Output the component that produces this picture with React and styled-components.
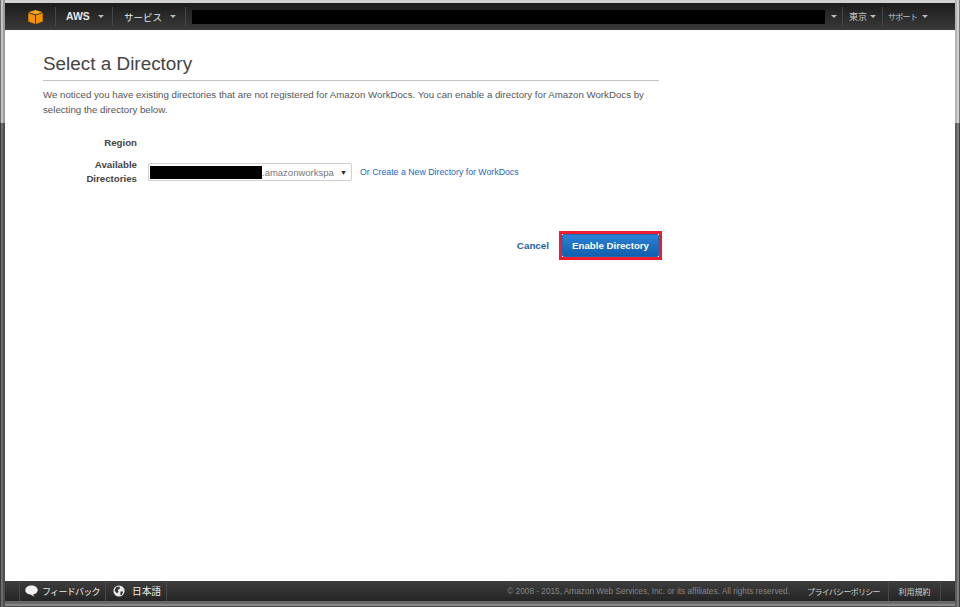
import React from "react";
import styled, { createGlobalStyle } from "styled-components";

const Global = createGlobalStyle`
  html, body { margin: 0; padding: 0; background: #fff; }
  body { font-family: "Liberation Sans", "Noto Sans CJK JP", sans-serif; }
  * { box-sizing: border-box; }
`;

const Frame = styled.div`
  width: 960px;
  height: 607px;
  overflow: hidden;
  display: grid;
  grid-template-rows: 27px 1fr 20px;
  padding: 3px 5px 6px 5px;
  background:
    linear-gradient(to right, #6e6e6e 0, #6e6e6e 1px, #c4c4c4 1px, #c4c4c4 3px, #9a9a9a 3px, #9a9a9a 5px, transparent 5px, transparent 955px, #b4b4b4 955px, #b4b4b4 957px, #d0d0d0 957px, #d0d0d0 959px, #7a7a7a 959px) top / 100% 123px no-repeat,
    linear-gradient(to right, #3c3c3c 0, #3c3c3c 1px, #6c6c6c 1px, #6c6c6c 3px, #4e4e4e 3px, #4e4e4e 5px, transparent 5px, transparent 955px, #5c5c5c 955px, #5c5c5c 957px, #7c7c7c 957px, #7c7c7c 959px, #3c3c3c 959px) bottom / 100% 484px no-repeat,
    linear-gradient(to bottom, #d2d2d2 0, #d2d2d2 3px, transparent 3px) top / 100% 3px no-repeat,
    linear-gradient(to bottom, #6a6a6a 0, #6a6a6a 3px, #8a8a8a 3px, #8a8a8a 5px, #4a4a4a 5px) bottom / 100% 6px no-repeat,
    #fff;
`;

const Nav = styled.header`
  display: flex;
  align-items: center;
  background: linear-gradient(to bottom, #1c1c1c, #3a3a3a);
  color: #eee;
  font-size: 10px;
`;

const NavCell = styled.div`
  display: flex;
  align-items: center;
  justify-content: ${(p) => p.$justify || "flex-start"};
  gap: ${(p) => p.$gap || 8}px;
  width: ${(p) => p.$w}px;
  height: 19px;
  padding-left: ${(p) => p.$pad || 0}px;
  border-right: ${(p) => (p.$noSep ? "none" : "1px solid #454545")};
  font-weight: ${(p) => (p.$bold ? 700 : 400)};
  font-size: ${(p) => p.$size || 10}px;
  letter-spacing: ${(p) => p.$track || 0}px;
  color: ${(p) => p.$color || "#e8e8e8"};
  flex: none;
  white-space: nowrap;
`;

const Redaction = styled.div`
  width: 633px;
  height: 14px;
  margin-left: 6px;
  background: #000;
  flex: none;
`;

const Caret = styled.span`
  width: 0;
  height: 0;
  border-left: 3px solid transparent;
  border-right: 3px solid transparent;
  border-top: 3px solid ${(p) => p.$color || "#bdbdbd"};
  flex: none;
`;

const Main = styled.main`
  background: #fff;
  padding: 21px 0 0 38px;
  min-height: 0;
`;

const Panel = styled.section`
  width: 616px;
`;

const Title = styled.h1`
  margin: 0;
  height: 29px;
  font-size: 18.9px;
  line-height: 26px;
  font-weight: 400;
  color: #444;
  border-bottom: 1px solid #c4c4c4;
  box-sizing: content-box;
`;

const Intro = styled.p`
  margin: 6px 0 0;
  font-size: 9.7px;
  line-height: 15px;
  color: #555;
`;

const FormRow = styled.div`
  display: flex;
  align-items: center;
  margin-top: ${(p) => p.$top}px;
`;

const Label = styled.label`
  width: 94px;
  flex: none;
  text-align: right;
  font-size: 9.7px;
  line-height: 14px;
  font-weight: 700;
  color: #444;
`;

const FakeSelect = styled.div`
  display: flex;
  align-items: center;
  width: 204px;
  height: 18px;
  margin-left: 11px;
  padding: 0 3px 0 1px;
  background: #fff;
  border: 1px solid #d0d0d0;
  border-radius: 2px;
  font-size: 9.5px;
  color: #777;
  flex: none;
`;

const SelectRedaction = styled.span`
  width: 112px;
  height: 13px;
  background: #000;
  flex: none;
`;

const SelectText = styled.span`
  flex: 1;
  white-space: nowrap;
`;

const SelectArrow = styled.span`
  font-size: 7px;
  color: #222;
  margin-right: 1px;
  flex: none;
`;

const TextLink = styled.a`
  margin-left: 8px;
  font-size: 8.78px;
  color: #1e66b8;
`;

const Actions = styled.div`
  display: flex;
  justify-content: flex-end;
  align-items: center;
  margin-top: 45px;
  margin-right: -3px;
`;

const Cancel = styled.a`
  font-size: 9.8px;
  font-weight: 700;
  color: #1f63b0;
  margin-right: 10px;
`;

const Highlight = styled.div`
  border: 3px solid #ee1c2e;
  background: #fff;
`;

const PrimaryButton = styled.button`
  display: block;
  width: 97px;
  height: 23px;
  padding: 0;
  border: 1px solid #1b69b8;
  border-radius: 2px;
  background: linear-gradient(to bottom, #2a82d6, #135fae);
  color: #fff;
  font-family: inherit;
  font-size: 9.7px;
  font-weight: 700;
`;

const Footer = styled.footer`
  display: flex;
  align-items: center;
  background: linear-gradient(to bottom, #3e3e3e, #242424);
  color: #eee;
  font-size: 10px;
`;

const FootCell = styled.div`
  display: flex;
  align-items: center;
  justify-content: ${(p) => p.$justify || "flex-start"};
  gap: ${(p) => p.$gap || 5}px;
  width: ${(p) => p.$w}px;
  height: 100%;
  padding-left: ${(p) => p.$pad || 0}px;
  border-right: ${(p) => (p.$noSep ? "none" : "1px solid #484848")};
  font-size: ${(p) => p.$size || 10}px;
  letter-spacing: ${(p) => p.$track || 0}px;
  color: ${(p) => p.$color || "#eee"};
  white-space: nowrap;
  flex: none;
`;

const Copyright = styled.div`
  flex: 1;
  text-align: right;
  padding-right: 9px;
  font-size: 8.25px;
  color: #868686;
  white-space: nowrap;
`;

const CubeLogo = () => (
  <svg width="15" height="14" viewBox="0 0 15 14">
    <path d="M7.5 0 14.5 2.2 7.8 4.4 0.5 2.2Z" fill="#f7a41d" />
    <path d="M0.3 3 7 5.2V14L0.3 11.4Z" fill="#f39200" />
    <path d="M14.7 3 8 5.2V14L14.7 11.4Z" fill="#f39200" />
  </svg>
);

const Bubble = () => (
  <svg width="13" height="12" viewBox="0 0 13 12">
    <path d="M6.5 0.5C10 0.5 12.7 2.4 12.7 5S10 9.4 8 9.4L9.6 11.8 5.4 9.5C2.6 9.3 0.3 7.5 0.3 5S3 0.5 6.5 0.5Z" fill="#f2f2f2" />
  </svg>
);

const Globe = () => (
  <svg width="12" height="12" viewBox="0 0 12 12">
    <circle cx="6" cy="6" r="5.6" fill="#e8e8e8" />
    <path d="M3 2.2 6.6 1.6 6.8 3.8 4.6 5 5.6 7 3.8 8.2 1.6 5.4ZM7.5 6.6 10.2 6.4 9 9.8 7.4 10.2Z" fill="#333" />
  </svg>
);

export default function App() {
  return (
    <>
      <Global />
      <Frame>
        <Nav>
          <NavCell $w={51} $justify="center" $pad={10}><CubeLogo /></NavCell>
          <NavCell $w={57} $pad={10} $bold $size={10.4}>AWS <Caret /></NavCell>
          <NavCell $w={73} $pad={11} $size={9.5}>サービス <Caret /></NavCell>
          <Redaction />
          <NavCell $w={18} $justify="center"><Caret /></NavCell>
          <NavCell $w={40} $pad={6} $gap={3} $size={9} $color="#c8c8c8">東京 <Caret /></NavCell>
          <NavCell $w={46} $pad={5} $gap={5} $size={8} $track={-0.7} $color="#c4c4c4" $noSep>サポート <Caret /></NavCell>
        </Nav>
        <Main>
          <Panel>
            <Title>Select a Directory</Title>
            <Intro>
              We noticed you have existing directories that are not registered for Amazon WorkDocs. You can enable a directory for Amazon WorkDocs by selecting the directory below.
            </Intro>
            <FormRow $top={19}>
              <Label>Region</Label>
            </FormRow>
            <FormRow $top={8}>
              <Label>Available<br />Directories</Label>
              <FakeSelect>
                <SelectRedaction />
                <SelectText>.amazonworkspa</SelectText>
                <SelectArrow>▼</SelectArrow>
              </FakeSelect>
              <TextLink>Or Create a New Directory for WorkDocs</TextLink>
            </FormRow>
            <Actions>
              <Cancel>Cancel</Cancel>
              <Highlight>
                <PrimaryButton>Enable Directory</PrimaryButton>
              </Highlight>
            </Actions>
          </Panel>
        </Main>
        <Footer>
          <FootCell $w={15} />
          <FootCell $w={86} $pad={5} $gap={4} $size={9} $track={-0.7}><Bubble />フィードバック</FootCell>
          <FootCell $w={61} $pad={7} $gap={7} $size={9.7}><Globe />日本語</FootCell>
          <Copyright>© 2008 - 2015, Amazon Web Services, Inc. or its affiliates. All rights reserved.</Copyright>
          <FootCell $w={90} $justify="center" $size={8} $track={-0.7} $color="#cfcfcf">プライバシーポリシー</FootCell>
          <FootCell $w={52} $justify="center" $size={8} $color="#cfcfcf">利用規約</FootCell>
          <FootCell $w={14} $noSep />
        </Footer>
      </Frame>
    </>
  );
}
